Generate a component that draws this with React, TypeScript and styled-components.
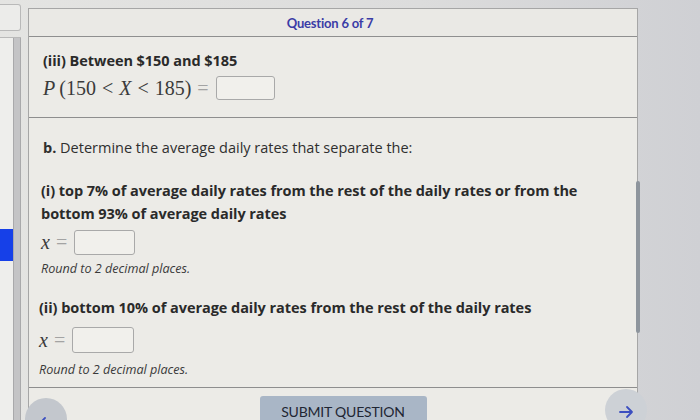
import React from "react";
import styled, { createGlobalStyle } from "styled-components";

const Global = createGlobalStyle`
  html, body { margin: 0; padding: 0; }
  body {
    width: 700px; height: 420px; overflow: hidden;
    background: linear-gradient(90deg, #e4e4e2 0%, #dcdcdc 60%, #cfd0d4 100%);
    font-family: "Open Sans", "Liberation Sans", sans-serif;
  }
`;

const Page = styled.div`
  display: flex;
  align-items: flex-start;
  gap: 7px;
  height: 420px;
  overflow: hidden;
`;

const Sidebar = styled.div`
  width: 21px;
  flex-shrink: 0;
  display: flex;
  flex-direction: column;
  gap: 6px;
  padding-top: 4px;
`;

const SideTab = styled.div`
  height: 25px;
  background: #ececea;
  border: 1px solid #b9b9b9;
  border-left: none;
  border-radius: 0 3px 3px 0;
`;

const SidePanel = styled.div`
  height: 390px;
  display: flex;
  background: #eeeeec;
  border-top: 1px solid #b9b9b9;
`;

const SideInner = styled.div`
  flex: 1;
  padding-top: 191px;
`;

const ActiveMark = styled.div`
  height: 32px;
  background: #1640e8;
`;

const SideRail = styled.div`
  width: 6px;
  background: #c4c4c6;
  border-left: 1px solid #a9a9ab;
  border-right: 1px solid #a9a9ab;
`;

const Card = styled.div`
  position: relative;
  width: 608px;
  flex-shrink: 0;
  margin-top: 8px;
  height: 440px;
  background: #ecebe7;
  border: 1px solid #a6a6a6;
  border-bottom: none;
  display: flex;
  flex-direction: column;
  & > * { flex-shrink: 0; }
`;

const Header = styled.div`
  height: 27px;
  border-bottom: 1px solid #8f8f8f;
  background: #eae9e5;
  display: flex;
  align-items: center;
  justify-content: center;
  padding-right: 6px;
  font-family: Lato, "Open Sans", sans-serif;
  font-size: 13px;
  font-weight: 700;
  color: #3a3ca6;
  letter-spacing: -0.2px;
`;

const Section = styled.div<{ $top: number; $bottom: number; $left?: number }>`
  padding: ${(p) => p.$top}px 20px ${(p) => p.$bottom}px ${(p) => p.$left ?? 14}px;
  display: flex;
  flex-direction: column;
`;

const Divider = styled.div`
  height: 1px;
  background: #8e8e8e;
`;

const Bold = styled.div`
  font-size: 14.5px;
  font-weight: 700;
  color: #2a2a2a;
  line-height: 23px;
  letter-spacing: -0.05px;
`;

const Plain = styled.div`
  font-size: 14.5px;
  color: #2f2f2f;
  line-height: 23px;
  b { font-weight: 700; }
`;

const MathRow = styled.div<{ $mt: number }>`
  display: flex;
  align-items: center;
  margin-top: ${(p) => p.$mt}px;
  font-family: "Liberation Serif", "Times New Roman", serif;
  font-size: 20px;
  color: #3a3a3a;
  height: 26px;
`;

const Ital = styled.span`
  font-style: italic;
`;

const Op = styled.span`
  padding: 0 6px;
`;

const Eq = styled.span`
  color: #a3a3a3;
  padding: 0 7px 0 6px;
`;

const AnswerBox = styled.div<{ $w: number; $h: number }>`
  width: ${(p) => p.$w}px;
  height: ${(p) => p.$h}px;
  box-sizing: border-box;
  border: 1.5px solid #a9a9a9;
  border-radius: 3px;
  background: #f1f0ec;
`;

const Note = styled.div<{ $mt: number }>`
  margin-top: ${(p) => p.$mt}px;
  font-size: 12.6px;
  font-style: italic;
  color: #3a3a3a;
  line-height: 17px;
`;

const Scrollbar = styled.div`
  position: absolute;
  right: -3px;
  top: 172px;
  width: 4px;
  height: 152px;
  border-radius: 2px;
  background: #8e959d;
`;

const Footer = styled.div`
  display: flex;
  justify-content: space-between;
  align-items: flex-start;
  padding: 7px 0 0 0;
`;

const RoundButton = styled.div<{ $offset: number }>`
  width: 42px;
  height: 42px;
  border-radius: 50%;
  background: #c3c7cd;
  display: flex;
  justify-content: center;
  padding-top: ${(p) => p.$offset}px;
  box-sizing: border-box;
  color: #3c4fc0;
`;

const LeftBtn = styled(RoundButton)`
  margin-left: -4px;
  margin-top: 3px;
`;

const RightBtn = styled(RoundButton)`
  margin-right: -10px;
  margin-top: -6px;
  background: #cdd1d6;
`;

const Submit = styled.div`
  width: 167px;
  height: 26px;
  margin-top: 1px;
  margin-left: 14px;
  border-radius: 3px;
  background: #a9b6c6;
  display: flex;
  align-items: center;
  justify-content: center;
  padding-top: 4px;
  box-sizing: border-box;
  font-family: Lato, "Open Sans", sans-serif;
  font-size: 14px;
  color: #1f2633;
  letter-spacing: -0.2px;
`;

export default function App() {
  return (
    <>
      <Global />
      <Page>
        <Sidebar>
          <SideTab />
          <SidePanel>
            <SideInner>
              <ActiveMark />
            </SideInner>
            <SideRail />
          </SidePanel>
        </Sidebar>
        <Card>
          <Header>Question 6 of 7</Header>
          <Section $top={12} $bottom={16}>
            <Bold>(iii) Between $150 and $185</Bold>
            <MathRow $mt={3}>
              <Ital>P</Ital>
              <span>&thinsp;(150</span>
              <Op>&lt;</Op>
              <Ital>X</Ital>
              <Op>&lt;</Op>
              <span>185)</span>
              <Eq>=</Eq>
              <AnswerBox $w={59} $h={24} />
            </MathRow>
          </Section>
          <Divider />
          <Section $top={18} $bottom={0}>
            <Plain>
              <b>b.</b> Determine the average daily rates that separate the:
            </Plain>
          </Section>
          <Section $top={20} $bottom={0} $left={12}>
            <Bold>
              (i) top 7% of average daily rates from the rest of the daily rates or from the
              <br />
              bottom 93% of average daily rates
            </Bold>
            <MathRow $mt={4}>
              <Ital>x</Ital>
              <Eq>=</Eq>
              <AnswerBox $w={61} $h={25} />
            </MathRow>
            <Note $mt={5}>Round to 2 decimal places.</Note>
          </Section>
          <Section $top={19} $bottom={9} $left={10}>
            <Bold>(ii) bottom 10% of average daily rates from the rest of the daily rates</Bold>
            <MathRow $mt={8}>
              <Ital>x</Ital>
              <Eq>=</Eq>
              <AnswerBox $w={62} $h={26} />
            </MathRow>
            <Note $mt={8}>Round to 2 decimal places.</Note>
          </Section>
          <Divider />
          <Footer>
            <LeftBtn $offset={18}>
              <svg width="18" height="14" viewBox="0 0 18 14" fill="none" stroke="currentColor" strokeWidth="1.8" strokeLinecap="round" strokeLinejoin="round">
                <path d="M15 7H3M8 2L3 7l5 5" />
              </svg>
            </LeftBtn>
            <Submit>SUBMIT QUESTION</Submit>
            <RightBtn $offset={16}>
              <svg width="18" height="14" viewBox="0 0 18 14" fill="none" stroke="currentColor" strokeWidth="1.8" strokeLinecap="round" strokeLinejoin="round">
                <path d="M3 7h12M10 2l5 5-5 5" />
              </svg>
            </RightBtn>
          </Footer>
          <Scrollbar />
        </Card>
      </Page>
    </>
  );
}
